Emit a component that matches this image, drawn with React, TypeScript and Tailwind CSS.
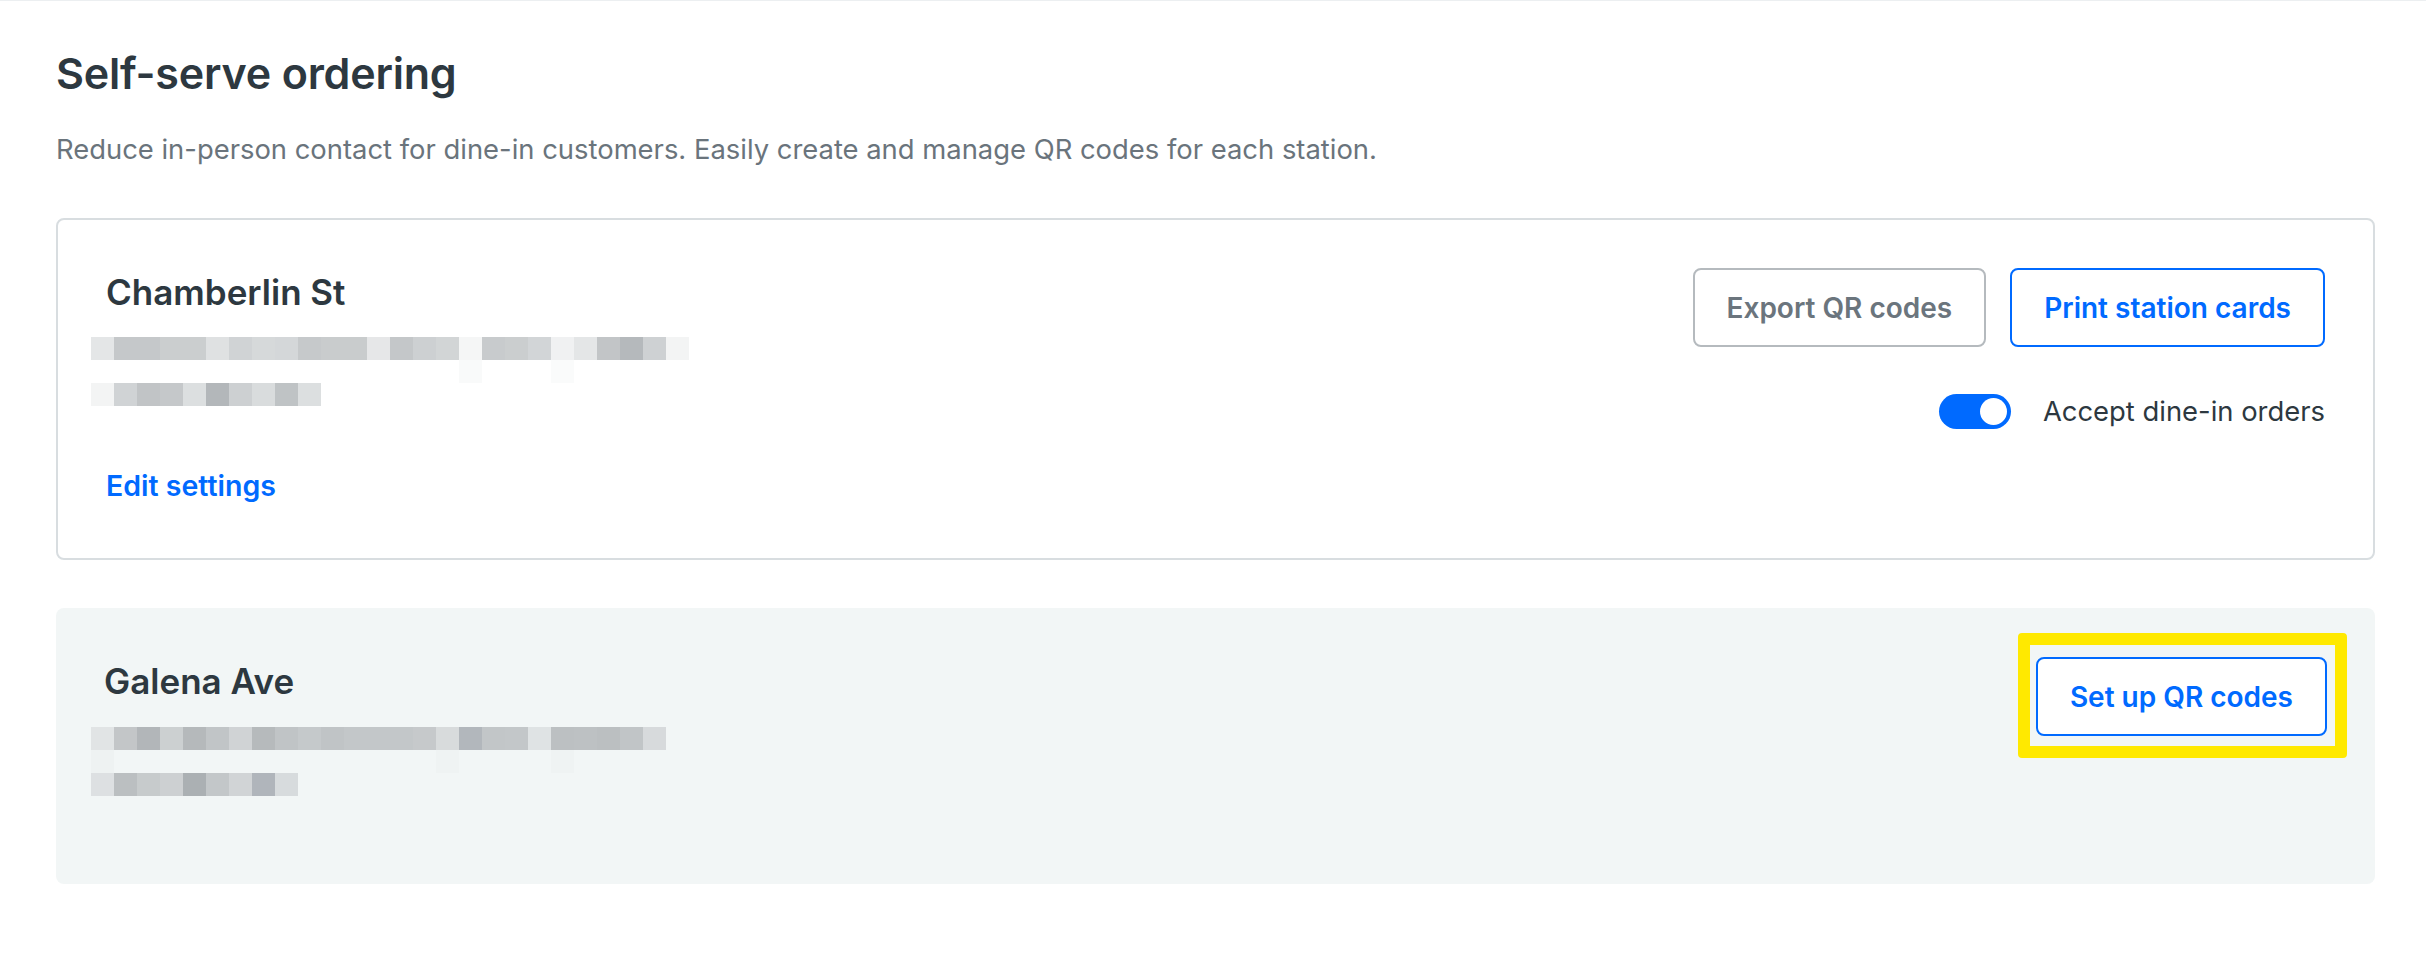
/**
 * SelfServeOrdering — QR 码自助点餐设置页
 *
 * 每个门店一张卡片：已开通的显示导出 / 打印按钮和接单开关，
 * 未开通的显示「Set up QR codes」入口。
 */

import { useState } from 'react';
import clsx from 'clsx';

// ============================================================================
// Data
// ============================================================================

interface Location {
  id: string;
  name: string;
  enabled: boolean;
  // 地址打码后的色块，每行一组灰度
  addressRows: string[][];
}

const LOCATIONS: Location[] = [
  {
    id: 'chamberlin',
    name: 'Chamberlin St',
    enabled: true,
    addressRows: [
      ['#e4e6e7', '#c5c8ca', '#c5c8ca', '#cbcecf', '#cbcecf', '#dfe1e2', '#d0d3d5', '#d6d9da', '#d4d7d9', '#c6c9cb', '#c9cccd', '#c9cccd', '#e6e7e8', '#c4c7c9', '#cdd0d2', '#d2d5d6', '#f5f6f6', '#c8cbcd', '#cbcecf', '#d2d5d7', '#f0f1f2', '#e4e6e7', '#c2c5c7', '#b5b9bc', '#ced1d3', '#f3f4f4'],
      ['#ffffff', '#ffffff', '#ffffff', '#ffffff', '#ffffff', '#ffffff', '#ffffff', '#ffffff', '#ffffff', '#ffffff', '#ffffff', '#ffffff', '#ffffff', '#ffffff', '#ffffff', '#ffffff', '#f9fafa', '#ffffff', '#ffffff', '#ffffff', '#fafbfb'],
      ['#f3f4f4', '#d0d3d5', '#c1c4c6', '#c5c8ca', '#dcdfe0', '#b3b7ba', '#cdd0d2', '#d9dcdd', '#bfc3c5', '#dcdfe0'],
    ],
  },
  {
    id: 'galena',
    name: 'Galena Ave',
    enabled: false,
    addressRows: [
      ['#e1e4e5', '#c3c6c8', '#b2b6b9', '#ccd0d1', '#b5b9bb', '#c1c5c7', '#d0d3d5', '#b6babc', '#c0c4c6', '#c5c9cb', '#c0c4c6', '#c3c7c9', '#c3c7c9', '#c3c7c9', '#c6c9cb', '#d8dbdc', '#b2b7bc', '#c2c6c8', '#c3c7c9', '#dfe3e4', '#bcc0c2', '#bdc1c3', '#bbbfc1', '#c1c5c7', '#d7dadc'],
      ['#eef2f2', '#f2f6f6', '#f2f6f6', '#f2f6f6', '#f2f6f6', '#f2f6f6', '#f2f6f6', '#f2f6f6', '#f2f6f6', '#f2f6f6', '#f2f6f6', '#f2f6f6', '#f2f6f6', '#f2f6f6', '#f2f6f6', '#eff3f3', '#f2f6f6', '#f2f6f6', '#f2f6f6', '#f2f6f6', '#eff3f3'],
      ['#dde0e2', '#bbbfc1', '#c7cbcc', '#cdd0d2', '#abb0b3', '#c3c7c9', '#d1d4d6', '#b0b5bb', '#d7dbdd'],
    ],
  },
];

// ============================================================================
// Page
// ============================================================================

export default function App() {
  return (
    <div
      className="min-h-screen bg-white border-t border-[#eceff1] pl-[56px] pr-[51px] pt-[46px] text-[#2d3840]"
      style={{ fontFamily: 'Inter, "Liberation Sans", sans-serif' }}
    >
      <h1 className="text-[43px] leading-[52px] font-semibold tracking-[-0.2px]">Self-serve ordering</h1>
      <p className="mt-[30px] text-[27.4px] leading-[40px] text-[#6a747c]">
        Reduce in-person contact for dine-in customers. Easily create and manage QR codes for each station.
      </p>

      <div className="mt-[49px] flex flex-col gap-[48px]">
        {LOCATIONS.map((loc) =>
          loc.enabled ? <ActiveCard key={loc.id} loc={loc} /> : <SetupCard key={loc.id} loc={loc} />,
        )}
      </div>
    </div>
  );
}

// ============================================================================
// Cards
// ============================================================================

function ActiveCard({ loc }: { loc: Location }) {
  const [accepting, setAccepting] = useState(true);
  return (
    <div className="flex justify-between rounded-lg border-2 border-[#d8dde0] px-[48px] pt-[48px] pb-[54px]">
      <div className="flex flex-col">
        <h2 className="text-[35px] leading-[48px] font-semibold">{loc.name}</h2>
        <Address rows={loc.addressRows} className="mt-[21px] -ml-[15px]" />
        <button className="mt-[62px] self-start text-[28.5px] leading-[36px] font-semibold text-[#006aff]">
          Edit settings
        </button>
      </div>

      <div className="flex flex-col items-end">
        <div className="flex gap-[24px]">
          <OutlineButton tone="gray">Export QR codes</OutlineButton>
          <OutlineButton tone="blue">Print station cards</OutlineButton>
        </div>
        <div className="mt-[46px] flex items-center gap-[32px]">
          <Toggle on={accepting} onChange={setAccepting} />
          <span className="text-[27.4px] leading-[36px]">Accept dine-in orders</span>
        </div>
      </div>
    </div>
  );
}

function SetupCard({ loc }: { loc: Location }) {
  return (
    <div className="flex justify-between rounded-lg bg-[#f2f6f6] px-[48px] pt-[49px] pb-[88px]">
      <div className="flex flex-col">
        <h2 className="text-[35px] leading-[48px] font-semibold">{loc.name}</h2>
        <Address rows={loc.addressRows} className="mt-[22px] -ml-[13px]" />
      </div>

      {/* 黄色框是标注，叠在按钮外面 */}
      <div className="relative self-start">
        <div className="pointer-events-none absolute -left-[18px] -right-[20px] -top-[24px] -bottom-[22px] rounded-[4px] border-[12px] border-[#ffe900]" />
        <OutlineButton tone="blue">Set up QR codes</OutlineButton>
      </div>
    </div>
  );
}

// ============================================================================
// Shared Components
// ============================================================================

function Address({ rows, className }: { rows: string[][]; className?: string }) {
  return (
    <div className={clsx('flex flex-col', className)}>
      {rows.map((row, i) => (
        <div key={i} className="flex h-[23px]">
          {row.map((c, j) => (
            <span key={j} className="h-full w-[23px]" style={{ backgroundColor: c }} />
          ))}
        </div>
      ))}
    </div>
  );
}

function OutlineButton({ tone, children }: { tone: 'gray' | 'blue'; children: string }) {
  return (
    <button
      className={clsx(
        'h-[79px] rounded-lg border-2 bg-white px-[32px] text-[28px] font-semibold',
        tone === 'gray' ? 'border-[#b5babe] text-[#6b757d]' : 'border-[#006aff] text-[#006aff]',
      )}
    >
      {children}
    </button>
  );
}

function Toggle({ on, onChange }: { on: boolean; onChange: (v: boolean) => void }) {
  return (
    <button
      onClick={() => onChange(!on)}
      className={clsx(
        'flex h-[35px] w-[72px] items-center rounded-full px-[4px]',
        on ? 'justify-end bg-[#006aff]' : 'justify-start bg-[#c6ccd0]',
      )}
    >
      <span className="h-[27px] w-[27px] rounded-full bg-white" />
    </button>
  );
}
